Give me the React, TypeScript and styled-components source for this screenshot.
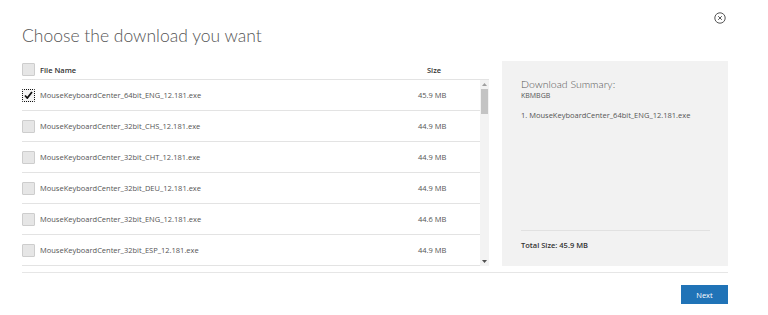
import styled, { createGlobalStyle } from 'styled-components'

const GlobalStyle = createGlobalStyle`
  html, body {
    margin: 0;
    padding: 0;
    background: #ffffff;
  }
  body {
    font-family: 'Open Sans', 'Liberation Sans', sans-serif;
    color: #555555;
  }
`

const files = [
  { name: 'MouseKeyboardCenter_64bit_ENG_12.181.exe', size: '45.9 MB', checked: true },
  { name: 'MouseKeyboardCenter_32bit_CHS_12.181.exe', size: '44.9 MB', checked: false },
  { name: 'MouseKeyboardCenter_32bit_CHT_12.181.exe', size: '44.9 MB', checked: false },
  { name: 'MouseKeyboardCenter_32bit_DEU_12.181.exe', size: '44.9 MB', checked: false },
  { name: 'MouseKeyboardCenter_32bit_ENG_12.181.exe', size: '44.6 MB', checked: false },
  { name: 'MouseKeyboardCenter_32bit_ESP_12.181.exe', size: '44.9 MB', checked: false },
]

const Page = styled.div`
  box-sizing: border-box;
  width: 768px;
  height: 315px;
  padding: 0 40px 0 22px;
`
const TopBar = styled.div`
  display: flex;
  justify-content: space-between;
  align-items: flex-start;
  height: 61px;
`
const Title = styled.h1`
  margin: 24px 0 0;
  font-family: Lato, 'Open Sans', sans-serif;
  font-size: 17.5px;
  line-height: 24px;
  font-weight: 300;
  color: #555555;
`
const CloseButton = styled.button`
  display: flex;
  margin: 12px 2px 0 0;
  padding: 0;
  border: none;
  background: none;
  color: #555555;
`
const Body = styled.div`
  display: flex;
  gap: 13px;
`
const TableArea = styled.div`
  width: 467px;
  display: flex;
  flex-direction: column;
`
const HeaderRow = styled.div`
  display: flex;
  align-items: center;
  height: 17px;
  padding-bottom: 1px;
  border-bottom: 1px solid #e3e3e3;
  font-size: 7.5px;
  font-weight: 600;
  color: #333333;
`
const NameCell = styled.div`
  flex: 1;
  display: flex;
  align-items: center;
  gap: 5px;
  white-space: nowrap;
`
const SizeCell = styled.div`
  width: 62px;
`
const ListArea = styled.div`
  display: flex;
  height: 186px;
`
const Rows = styled.div`
  flex: 1;
  overflow: hidden;
`
const Row = styled.div`
  display: flex;
  align-items: center;
  box-sizing: border-box;
  height: 31px;
  border-bottom: 1px solid #e3e3e3;
  font-size: 7.5px;
  color: #555555;
`
const Checkbox = styled.span<{ $checked?: boolean }>`
  box-sizing: border-box;
  display: inline-flex;
  align-items: center;
  justify-content: center;
  width: 13px;
  height: 13px;
  flex: none;
  border-radius: 1px;
  border: ${(p) => (p.$checked ? '1px dotted #111' : '1px solid #cdcdcd')};
  background: ${(p) => (p.$checked ? '#f4f4f4' : '#e6e6e6')};
`
const Scrollbar = styled.div`
  width: 9px;
  display: flex;
  flex-direction: column;
  align-items: center;
  background: #f3f3f3;
`
const ScrollArrow = styled.div`
  height: 9px;
  display: flex;
  align-items: center;
  justify-content: center;
`
const ScrollThumb = styled.div`
  width: 7px;
  height: 25px;
  background: #c4c4c4;
`
const ScrollTrack = styled.div`
  flex: 1;
`
const Summary = styled.div`
  box-sizing: border-box;
  width: 226px;
  height: 205px;
  background: #f2f2f2;
  padding: 17px 18px 16px 19px;
  display: flex;
  flex-direction: column;
`
const SummaryTitle = styled.div`
  font-family: Lato, 'Open Sans', sans-serif;
  font-size: 10.5px;
  line-height: 13px;
  font-weight: 300;
  color: #555555;
`
const SummaryCode = styled.div`
  font-size: 7px;
  line-height: 9px;
  color: #555555;
`
const SummaryItem = styled.div`
  margin-top: 10px;
  font-size: 7.5px;
  color: #555555;
  white-space: nowrap;
`
const SummaryFooter = styled.div`
  margin-top: auto;
  border-top: 1px solid #e1e1e1;
  padding-top: 9px;
  font-size: 7.5px;
  font-weight: 600;
  color: #333333;
`
const Footer = styled.div`
  margin-top: 6px;
  border-top: 1px solid #e6e6e6;
  display: flex;
  justify-content: flex-end;
  padding-top: 12px;
`
const NextButton = styled.button`
  width: 47px;
  height: 19px;
  border: none;
  background: #2073b7;
  color: #ffffff;
  font-family: 'Open Sans', 'Liberation Sans', sans-serif;
  font-size: 7.5px;
  padding: 0;
`

const CheckMark = () => (
  <svg width="9" height="8" viewBox="0 0 9 8">
    <path d="M1 4.5 L3.3 7 L8 1" fill="none" stroke="#111" strokeWidth="1.8" />
  </svg>
)

const App = () => {
  return (
    <Page>
      <GlobalStyle />
      <TopBar>
        <Title>Choose the download you want</Title>
        <CloseButton aria-label="Close">
          <svg width="12" height="12" viewBox="0 0 12 12">
            <circle cx="6" cy="6" r="5.2" fill="none" stroke="#555" strokeWidth="1" />
            <path d="M4.2 4.2 L7.8 7.8 M7.8 4.2 L4.2 7.8" stroke="#555" strokeWidth="1" />
          </svg>
        </CloseButton>
      </TopBar>
      <Body>
        <TableArea>
          <HeaderRow>
            <NameCell>
              <Checkbox />
              File Name
            </NameCell>
            <SizeCell>Size</SizeCell>
          </HeaderRow>
          <ListArea>
            <Rows>
              {files.map((f) => (
                <Row key={f.name}>
                  <NameCell>
                    <Checkbox $checked={f.checked}>{f.checked && <CheckMark />}</Checkbox>
                    {f.name}
                  </NameCell>
                  <SizeCell>{f.size}</SizeCell>
                </Row>
              ))}
            </Rows>
            <Scrollbar>
              <ScrollArrow>
                <svg width="5" height="3" viewBox="0 0 5 3">
                  <path d="M0 3 L2.5 0 L5 3 Z" fill="#a0a0a0" />
                </svg>
              </ScrollArrow>
              <ScrollThumb />
              <ScrollTrack />
              <ScrollArrow>
                <svg width="5" height="3" viewBox="0 0 5 3">
                  <path d="M0 0 L2.5 3 L5 0 Z" fill="#505050" />
                </svg>
              </ScrollArrow>
            </Scrollbar>
          </ListArea>
        </TableArea>
        <Summary>
          <SummaryTitle>Download Summary:</SummaryTitle>
          <SummaryCode>KBMBGB</SummaryCode>
          <SummaryItem>1. MouseKeyboardCenter_64bit_ENG_12.181.exe</SummaryItem>
          <SummaryFooter>Total Size: 45.9 MB</SummaryFooter>
        </Summary>
      </Body>
      <Footer>
        <NextButton>Next</NextButton>
      </Footer>
    </Page>
  )
}

export default App
